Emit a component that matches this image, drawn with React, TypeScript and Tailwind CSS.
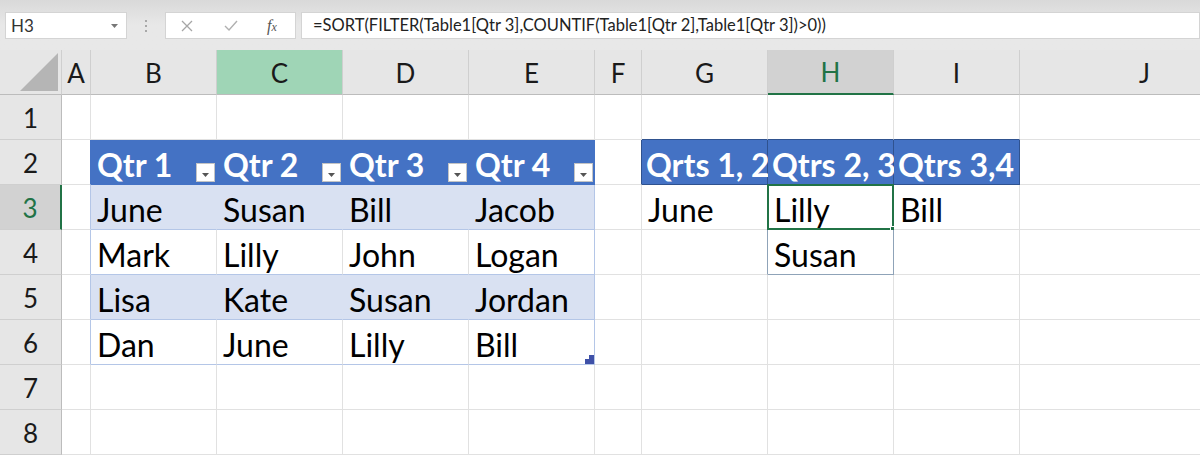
import React from 'react';

const LETTERS = ['A', 'B', 'C', 'D', 'E', 'F', 'G', 'H', 'I', 'J'];

// row number -> values for columns A..J
const DATA: Record<number, string[]> = {
  2: ['', 'Qtr 1', 'Qtr 2', 'Qtr 3', 'Qtr 4', '', 'Qrts 1, 2', 'Qtrs 2, 3', 'Qtrs 3,4', ''],
  3: ['', 'June', 'Susan', 'Bill', 'Jacob', '', 'June', 'Lilly', 'Bill', ''],
  4: ['', 'Mark', 'Lilly', 'John', 'Logan', '', '', 'Susan', '', ''],
  5: ['', 'Lisa', 'Kate', 'Susan', 'Jordan', '', '', '', '', ''],
  6: ['', 'Dan', 'June', 'Lilly', 'Bill', '', '', '', '', ''],
};

const BASE = 'relative flex items-center whitespace-nowrap border-r border-b pt-[5px] text-[32px] leading-none';

function cellClass(r: number, c: number): string {
  // first table B2:E6
  if (c >= 1 && c <= 4 && r >= 2 && r <= 6) {
    if (r === 2) return `${BASE} px-[6px] bg-[#4472c4] text-white font-bold border-r-[#4472c4] border-b-[#4472c4]`;
    const banded = r === 3 || r === 5;
    if (c === 4) {
      return banded
        ? `${BASE} px-[6px] bg-[#d9e1f2] text-black border-r-[#b4c6e7] border-b-[#b4c6e7]`
        : `${BASE} px-[6px] bg-white text-black border-r-[#b4c6e7] border-b-[#b4c6e7]`;
    }
    return banded
      ? `${BASE} px-[6px] bg-[#d9e1f2] text-black border-r-[#d9e1f2] border-b-[#b4c6e7]`
      : `${BASE} px-[6px] bg-white text-black border-r-[#e1e1e1] border-b-[#b4c6e7]`;
  }
  if (c === 0 && r >= 3 && r <= 6) return `${BASE} bg-white border-r-[#b4c6e7] border-b-[#e1e1e1]`;
  if (c === 0 && r === 2) return `${BASE} bg-white border-r-[#4472c4] border-b-[#e1e1e1]`;
  // second table header G2:I2
  if (r === 2 && c >= 6 && c <= 8) return `${BASE} px-[4px] bg-[#4472c4] text-white font-bold border-r-[#2f528f] border-b-[#2f528f]`;
  if (r === 2 && c === 5) return `${BASE} bg-white border-r-[#2f528f] border-b-[#e1e1e1]`;
  if (r === 1 && c >= 6 && c <= 8) return `${BASE} bg-white border-r-[#e1e1e1] border-b-[#2f528f]`;
  // spill range H3:H4
  if ((r === 3 || r === 4) && c === 6) return `${BASE} px-[6px] bg-white text-black border-r-[#8fa3b8] border-b-[#e1e1e1]`;
  if (r === 3 && c === 7) return `${BASE} px-[6px] bg-white text-black border-r-[#8fa3b8] border-b-[#8fa3b8]`;
  if (r === 4 && c === 7) return `${BASE} px-[6px] bg-white text-black border-r-[#8fa3b8] border-b-[#8fa3b8]`;
  return `${BASE} px-[6px] bg-white text-black border-r-[#e1e1e1] border-b-[#e1e1e1]`;
}

const FilterButton = () => (
  <span className="absolute right-[1px] bottom-[2px] flex h-[19px] w-[19px] items-end justify-center border border-[#c4c4c4] bg-white pb-[4px]">
    <svg width="7" height="4" viewBox="0 0 7 4">
      <path d="M0 0 H7 L3.5 4 Z" fill="#555" />
    </svg>
  </span>
);

export default function App() {
  return (
    <div className="h-[456px] w-[1200px] overflow-hidden bg-white font-[Lato,sans-serif] text-black">
      {/* formula bar */}
      <div className="flex h-[50px] items-start bg-gradient-to-b from-[#d9d9d9] via-[#e8e8e8] to-[#e8e8e8] pt-[12px]">
        <div className="ml-[5px] flex h-[27px] w-[122px] items-center justify-between border border-[#d4d4d4] bg-white pl-[5px] pr-[8px] text-[17px] text-[#333]">
          <span>H3</span>
          <svg width="7" height="4" viewBox="0 0 7 4">
            <path d="M0 0 H7 L3.5 4 Z" fill="#777" />
          </svg>
        </div>
        <div className="flex h-[27px] w-[38px] flex-col items-center justify-center gap-[3px]">
          <span className="h-[2px] w-[2px] bg-[#a8a8a8]" />
          <span className="h-[2px] w-[2px] bg-[#a8a8a8]" />
          <span className="h-[2px] w-[2px] bg-[#a8a8a8]" />
        </div>
        <div className="flex h-[27px] w-[131px] items-center border border-[#d4d4d4] bg-white">
          <svg className="ml-[15px]" width="12" height="12" viewBox="0 0 12 12">
            <path d="M1 1 L11 11 M11 1 L1 11" stroke="#a6a6a6" strokeWidth="1.3" fill="none" />
          </svg>
          <svg className="ml-[31px]" width="14" height="11" viewBox="0 0 14 11">
            <path d="M1 6 L5 10 L13 1" stroke="#b0b0b0" strokeWidth="1.4" fill="none" />
          </svg>
          <span className="ml-[29px] font-['Liberation_Serif',serif] text-[16px] italic text-[#555]">
            f<span className="text-[12px]">x</span>
          </span>
        </div>
        <div className="ml-[5px] flex h-[27px] flex-1 items-center border border-[#d4d4d4] bg-white pl-[11px] text-[16.5px] text-[#222]">
          =SORT(FILTER(Table1[Qtr 3],COUNTIF(Table1[Qtr 2],Table1[Qtr 3])&gt;0))
        </div>
      </div>

      {/* sheet */}
      <div className="grid grid-cols-[62px_29px_126px_126px_126px_126px_47px_126px_126px_126px_250px] auto-rows-[45px]">
        {/* column headers */}
        <div className="flex items-end justify-end border-r border-b border-r-[#cfcfcf] border-b-[#bcbcbc] bg-[#e6e6e6] pb-[3px] pr-[3px]">
          <svg width="38" height="38" viewBox="0 0 38 38">
            <path d="M0 38 L38 0 L38 38 Z" fill="#b5b5b5" />
          </svg>
        </div>
        {LETTERS.map((l) =>
          l === 'C' ? (
            <div key={l} className="flex items-center justify-center border-r border-b border-r-[#cfcfcf] border-b-[#bcbcbc] bg-[#9fd5b6] pt-[2px] text-[26px] text-[#1a1a1a]">
              {l}
            </div>
          ) : l === 'H' ? (
            <div key={l} className="flex items-center justify-center border-r border-b-2 border-r-[#cfcfcf] border-b-[#217346] bg-[#d2d2d2] pt-[2px] text-[26px] text-[#217346]">
              {l}
            </div>
          ) : (
            <div key={l} className="flex items-center justify-center border-r border-b border-r-[#cfcfcf] border-b-[#bcbcbc] bg-[#e6e6e6] pt-[2px] text-[26px] text-[#1a1a1a]">
              {l}
            </div>
          )
        )}

        {[1, 2, 3, 4, 5, 6, 7, 8].map((r) => (
          <React.Fragment key={r}>
            {r === 3 ? (
              <div className="flex items-center justify-center border-r-2 border-b border-r-[#217346] border-b-[#cfcfcf] bg-[#d2d2d2] pt-[3px] text-[26px] text-[#217346]">
                {r}
              </div>
            ) : (
              <div className="flex items-center justify-center border-r border-b border-r-[#bcbcbc] border-b-[#cfcfcf] bg-[#e6e6e6] pt-[3px] text-[26px] text-[#1a1a1a]">
                {r}
              </div>
            )}
            {LETTERS.map((_, c) => (
              <div key={c} className={cellClass(r, c)}>
                <span>{DATA[r]?.[c] ?? ''}</span>
                {r === 2 && c >= 1 && c <= 4 && <FilterButton />}
                {r === 6 && c === 4 && (
                  <svg className="absolute right-0 bottom-0" width="9" height="9" viewBox="0 0 9 9">
                    <path d="M4 0 H9 V9 H0 V4 H4 Z" fill="#3f51a8" />
                  </svg>
                )}
                {r === 3 && c === 7 && (
                  <>
                    <span className="pointer-events-none absolute -top-[1px] -left-[1px] -right-[1px] -bottom-[1px] border-2 border-[#217346]" />
                    <span className="absolute -right-[4px] -bottom-[4px] h-[7px] w-[7px] border border-white bg-[#217346]" />
                  </>
                )}
              </div>
            ))}
          </React.Fragment>
        ))}
      </div>
    </div>
  );
}
